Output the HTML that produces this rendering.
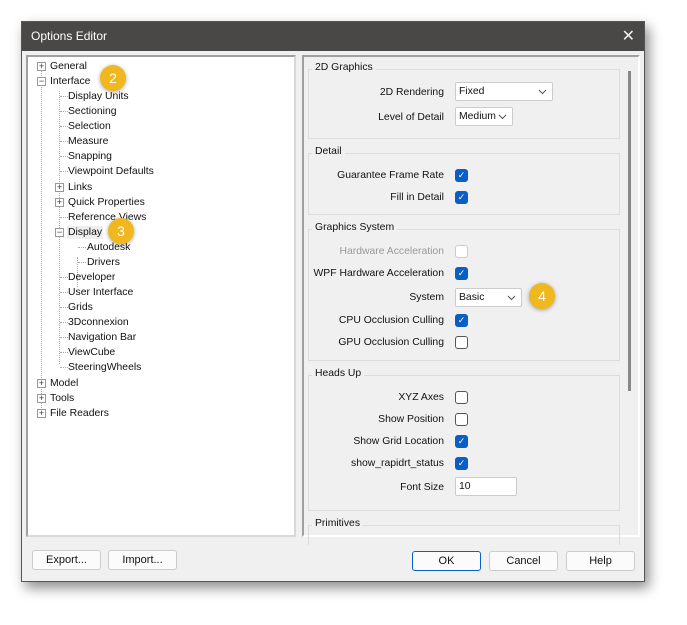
<!DOCTYPE html>
<html><head><style>
*{margin:0;padding:0;box-sizing:border-box}
body{width:687px;height:625px;background:#fff;font-family:"Liberation Sans",sans-serif;font-size:10.4px;color:#111;position:relative;overflow:hidden}
.dlg{position:absolute;left:21px;top:21px;width:624px;height:561px;background:#f0f0f0;border:1px solid #555;box-shadow:4px 6px 12px rgba(0,0,0,.45)}
.title{position:absolute;left:0;top:0;right:0;height:29px;background:#4a4846;color:#fff;font-size:12px;line-height:29px;padding-left:9px}
.x{position:absolute;right:9px;top:0;color:#eee;font-size:16px}
.tree{position:absolute;left:4px;top:33px;width:270px;height:482px;background:#fff;border:2px solid #a0a0a0;border-right-color:#d8d8d8;border-bottom-color:#d8d8d8}
.t{position:absolute;white-space:nowrap;line-height:13px}
.pm{position:absolute;width:9px;height:9px;border:1px solid #999;background:#fff;font-size:9px;line-height:7px;text-align:center;color:#333}
.vl{position:absolute;border-left:1px dotted #aaa}
.hl{position:absolute;border-top:1px dotted #aaa;width:8px}
.rp{position:absolute;left:280px;top:33px;width:338px;height:482px;border:2px solid #a0a0a0;border-right-color:#fff;border-bottom-color:#fff}
.g{position:absolute;left:4px;width:312px;border:1px solid #dcdcdc}
.gl{position:absolute;left:3px;top:-8px;background:#f0f0f0;padding:0 3px}
.lb{position:absolute;right:175px;text-align:right;white-space:nowrap}
.cb{position:absolute;left:146px;width:13px;height:13px;border-radius:3px;background:#0a5fc4;color:#fff;font-size:9px;text-align:center;line-height:13px}
.cu{position:absolute;left:146px;width:13px;height:13px;border-radius:3px;border:1px solid #555;background:#fff}
.cmb{position:absolute;left:146px;height:19px;background:#fff;border:1px solid #ccc;border-radius:2px;padding-left:3px;line-height:18px}
.cmb svg{position:absolute;right:5px;top:6px}
.btn{position:absolute;height:20px;background:#fbfbfb;border:1px solid #ccc;border-radius:3px;text-align:center;line-height:18px;font-size:11px}
.badge{position:absolute;width:26px;height:26px;border-radius:50%;background:#f0b71e;color:#fff;font-size:14px;text-align:center;line-height:26px;box-shadow:0 1px 4px rgba(0,0,0,.35)}
</style></head><body>
<div class="dlg">
<div class="title">Options Editor<span class="x">✕</span></div>
<div class="tree">
<div class="vl" style="left:13px;top:12px;height:343px"></div>
<div class="vl" style="left:31px;top:34px;height:273px"></div>
<div class="vl" style="left:49px;top:200px;height:30px"></div>
<div class="pm" style="left:9px;top:5px">+</div><div class="t" style="left:22px;top:3px">General</div>
<div class="pm" style="left:9px;top:20px">−</div><div class="t" style="left:22px;top:18px">Interface</div>
<div class="hl" style="left:32px;top:39px"></div><div class="t" style="left:40px;top:33px">Display Units</div>
<div class="hl" style="left:32px;top:54px"></div><div class="t" style="left:40px;top:48px">Sectioning</div>
<div class="hl" style="left:32px;top:69px"></div><div class="t" style="left:40px;top:63px">Selection</div>
<div class="hl" style="left:32px;top:84px"></div><div class="t" style="left:40px;top:78px">Measure</div>
<div class="hl" style="left:32px;top:99px"></div><div class="t" style="left:40px;top:93px">Snapping</div>
<div class="hl" style="left:32px;top:114px"></div><div class="t" style="left:40px;top:108px">Viewpoint Defaults</div>
<div class="pm" style="left:27px;top:126px">+</div><div class="t" style="left:40px;top:124px">Links</div>
<div class="pm" style="left:27px;top:141px">+</div><div class="t" style="left:40px;top:139px">Quick Properties</div>
<div class="hl" style="left:32px;top:160px"></div><div class="t" style="left:40px;top:154px">Reference Views</div>
<div class="pm" style="left:27px;top:171px">−</div><div class="t" style="left:39px;top:169px;background:#eee;padding:0 1px">Display</div>
<div class="hl" style="left:50px;top:190px"></div><div class="t" style="left:59px;top:184px">Autodesk</div>
<div class="hl" style="left:50px;top:205px"></div><div class="t" style="left:59px;top:199px">Drivers</div>
<div class="hl" style="left:32px;top:220px"></div><div class="t" style="left:40px;top:214px">Developer</div>
<div class="hl" style="left:32px;top:235px"></div><div class="t" style="left:40px;top:229px">User Interface</div>
<div class="hl" style="left:32px;top:250px"></div><div class="t" style="left:40px;top:244px">Grids</div>
<div class="hl" style="left:32px;top:265px"></div><div class="t" style="left:40px;top:259px">3Dconnexion</div>
<div class="hl" style="left:32px;top:280px"></div><div class="t" style="left:40px;top:274px">Navigation Bar</div>
<div class="hl" style="left:32px;top:295px"></div><div class="t" style="left:40px;top:289px">ViewCube</div>
<div class="hl" style="left:32px;top:310px"></div><div class="t" style="left:40px;top:304px">SteeringWheels</div>
<div class="pm" style="left:9px;top:322px">+</div><div class="t" style="left:22px;top:320px">Model</div>
<div class="pm" style="left:9px;top:337px">+</div><div class="t" style="left:22px;top:335px">Tools</div>
<div class="pm" style="left:9px;top:352px">+</div><div class="t" style="left:22px;top:350px">File Readers</div>
</div>
<div class="rp">
<div style="position:absolute;left:324px;top:14px;width:3px;height:320px;background:#888"></div>
<div class="g" style="top:12px;height:70px"><div class="gl">2D Graphics</div>
<div class="lb" style="top:17px">2D Rendering</div><div class="cmb" style="top:12px;width:98px">Fixed<svg width="9" height="6"><path d="M1 1l3.5 3.5L8 1" fill="none" stroke="#555"/></svg></div>
<div class="lb" style="top:42px">Level of Detail</div><div class="cmb" style="top:37px;width:58px">Medium<svg width="9" height="6"><path d="M1 1l3.5 3.5L8 1" fill="none" stroke="#555"/></svg></div></div>
<div class="g" style="top:96px;height:62px"><div class="gl">Detail</div>
<div class="lb" style="top:16px">Guarantee Frame Rate</div><div class="cb" style="top:15px">✓</div>
<div class="lb" style="top:38px">Fill in Detail</div><div class="cb" style="top:37px">✓</div></div>
<div class="g" style="top:172px;height:132px"><div class="gl">Graphics System</div>
<div class="lb" style="top:16px;color:#999">Hardware Acceleration</div><div class="cu" style="top:15px;border-color:#ccc"></div>
<div class="lb" style="top:38px">WPF Hardware Acceleration</div><div class="cb" style="top:37px">✓</div>
<div class="lb" style="top:62px">System</div><div class="cmb" style="top:58px;width:67px">Basic<svg width="9" height="6"><path d="M1 1l3.5 3.5L8 1" fill="none" stroke="#555"/></svg></div>
<div class="lb" style="top:85px">CPU Occlusion Culling</div><div class="cb" style="top:84px">✓</div>
<div class="lb" style="top:107px">GPU Occlusion Culling</div><div class="cu" style="top:106px"></div></div>
<div class="g" style="top:318px;height:136px"><div class="gl">Heads Up</div>
<div class="lb" style="top:16px">XYZ Axes</div><div class="cu" style="top:15px"></div>
<div class="lb" style="top:38px">Show Position</div><div class="cu" style="top:37px"></div>
<div class="lb" style="top:60px">Show Grid Location</div><div class="cb" style="top:59px">✓</div>
<div class="lb" style="top:82px">show_rapidrt_status</div><div class="cb" style="top:81px">✓</div>
<div class="lb" style="top:106px">Font Size</div><div class="cmb" style="top:101px;width:62px">10</div></div>
<div class="g" style="top:468px;height:20px;border-bottom:none"><div class="gl">Primitives</div></div>
</div>
<div class="btn" style="left:10px;top:528px;width:69px">Export...</div>
<div class="btn" style="left:86px;top:528px;width:69px">Import...</div>
<div class="btn" style="left:390px;top:529px;width:69px;border-color:#0a5fc4">OK</div>
<div class="btn" style="left:467px;top:529px;width:69px">Cancel</div>
<div class="btn" style="left:544px;top:529px;width:69px">Help</div>
</div>
<div class="badge" style="left:100px;top:65px">2</div>
<div class="badge" style="left:108px;top:218px">3</div>
<div class="badge" style="left:529px;top:283px">4</div>
</body></html>
